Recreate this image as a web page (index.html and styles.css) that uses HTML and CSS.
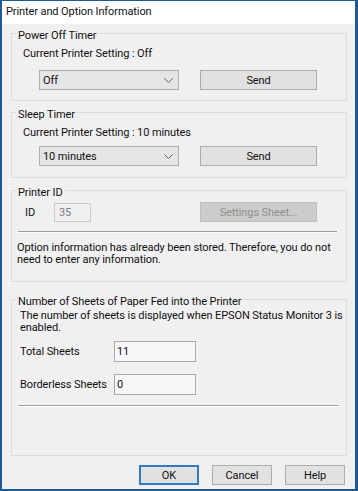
FILE: index.html
```html
<!DOCTYPE html>
<html>
<head>
<meta charset="utf-8">
<link rel="stylesheet" href="styles.css">
</head>
<body>
<div class="window">
  <div class="titlebar">Printer and Option Information</div>
  <div class="content">
    <section class="group g1">
      <div class="legend">Power Off Timer</div>
      <div class="text-row">Current Printer Setting : Off</div>
      <div class="ctrl-row">
        <div class="select"><span>Off</span><svg class="chev" width="9" height="5" viewBox="0 0 9 5"><polyline points="0.5,0.5 4.5,4.5 8.5,0.5" fill="none" stroke="#606060" stroke-width="1"/></svg></div>
        <div class="btn send">Send</div>
      </div>
    </section>
    <section class="group g2">
      <div class="legend">Sleep Timer</div>
      <div class="text-row">Current Printer Setting : 10 minutes</div>
      <div class="ctrl-row">
        <div class="select"><span>10 minutes</span><svg class="chev" width="9" height="5" viewBox="0 0 9 5"><polyline points="0.5,0.5 4.5,4.5 8.5,0.5" fill="none" stroke="#606060" stroke-width="1"/></svg></div>
        <div class="btn send">Send</div>
      </div>
    </section>
    <section class="group g3">
      <div class="legend">Printer ID</div>
      <div class="id-row">
        <span class="id-label">ID</span>
        <div class="field id-field">35</div>
        <div class="btn disabled">Settings Sheet...</div>
      </div>
      <div class="sep sep3"></div>
      <p class="note note3">Option information has already been stored. Therefore, you do not need to enter any information.</p>
    </section>
    <section class="group g4">
      <div class="legend">Number of Sheets of Paper Fed into the Printer</div>
      <p class="note note4">The number of sheets is displayed when EPSON Status Monitor 3 is enabled.</p>
      <div class="sheet-row first">
        <span class="sheet-label">Total Sheets</span>
        <div class="field sheet-field">11</div>
      </div>
      <div class="sheet-row second">
        <span class="sheet-label">Borderless Sheets</span>
        <div class="field sheet-field">0</div>
      </div>
      <div class="sep sep4"></div>
    </section>
  </div>
  <div class="footer">
    <div class="btn dlg ok">OK</div>
    <div class="btn dlg">Cancel</div>
    <div class="btn dlg">Help</div>
  </div>
</div>
</body>
</html>
```

FILE: styles.css
```css
html, body {
  margin: 0;
  padding: 0;
  background: #f0f0f0;
}
body {
  font-family: Roboto, "Noto Sans", sans-serif;
  font-size: 11px;
  letter-spacing: -0.1px;
  color: #111;
}
.window {
  width: 358px;
  height: 491px;
  box-sizing: border-box;
  border-style: solid;
  border-color: #1f5a96;
  border-width: 1px 3px 2px 2px;
  background: #f0f0f0;
}
.titlebar {
  height: 23px;
  line-height: 22px;
  background: #fff;
  padding-left: 4px;
  white-space: nowrap;
}
.content {
  padding: 0 8px 0 9px;
}
.group {
  border: 1px solid #dcdcdc;
}
.legend {
  width: fit-content;
  margin: -5px 0 0 4px;
  padding: 0 2px;
  line-height: 14px;
  height: 14px;
  background: #f0f0f0;
  white-space: nowrap;
}
.text-row {
  margin: 4px 0 0 11px;
  line-height: 14px;
  height: 14px;
}
.ctrl-row {
  display: flex;
  height: 20px;
}
.g1 { margin-top: 9px; padding-bottom: 10px; }
.g1 .ctrl-row { margin-top: 9px; }
.g2 { margin-top: 11px; padding-bottom: 11px; }
.g2 .ctrl-row { margin-top: 6px; }
.g3 { margin-top: 12px; padding-bottom: 15px; }
.g4 { margin-top: 17px; padding-bottom: 48px; }

.select {
  margin-left: 27px;
  width: 140px;
  height: 20px;
  box-sizing: border-box;
  border: 1px solid #adadad;
  background: #e5e5e5;
  display: flex;
  align-items: center;
  justify-content: space-between;
  padding: 0 5px 0 3px;
}
.chev {
  display: block;
}
.btn {
  box-sizing: border-box;
  height: 20px;
  border: 1px solid #adadad;
  background: #e1e1e1;
  display: flex;
  align-items: center;
  justify-content: center;
  white-space: nowrap;
}
.send {
  margin-left: 21px;
  width: 117px;
}
.id-row {
  display: flex;
  align-items: center;
  margin-top: 2px;
  height: 20px;
}
.id-label {
  margin-left: 13px;
  width: 29px;
}
.field {
  box-sizing: border-box;
  border: 1px solid #a9a9a9;
  background: #f7f7f7;
  display: flex;
  align-items: center;
}
.id-field {
  width: 37px;
  height: 19px;
  border-color: #cccccc;
  background: #f0f0f0;
  color: #7a7a7a;
  padding-left: 4px;
}
.disabled {
  margin-left: 109px;
  width: 117px;
  background: #cccccc;
  border-color: #bfbfbf;
  color: #8f8f8f;
}
.sep {
  height: 1px;
  background: #a0a0a0;
  border-bottom: 1px solid #ffffff;
  margin-left: 6px;
}
.sep3 {
  margin-top: 9px;
  width: 319px;
}
.sep4 {
  margin-top: 10px;
  width: 321px;
}
.note {
  margin: 0;
  line-height: 12px;
}
.note3 {
  margin: 9px 4px 0 5px;
}
.note4 {
  margin: 1px 0 0 8px;
}
.sheet-row {
  display: flex;
  align-items: center;
  height: 21px;
}
.sheet-row.first { margin-top: 7px; }
.sheet-row.second { margin-top: 12px; }
.sheet-label {
  margin-left: 8px;
  width: 94px;
}
.sheet-field {
  width: 82px;
  height: 21px;
  padding-left: 2px;
}
.footer {
  display: flex;
  justify-content: flex-end;
  gap: 13px;
  margin-top: 9px;
  padding-right: 10px;
}
.dlg {
  width: 60px;
}
.ok {
  border: 2px solid #2f7bc4;
}
```
